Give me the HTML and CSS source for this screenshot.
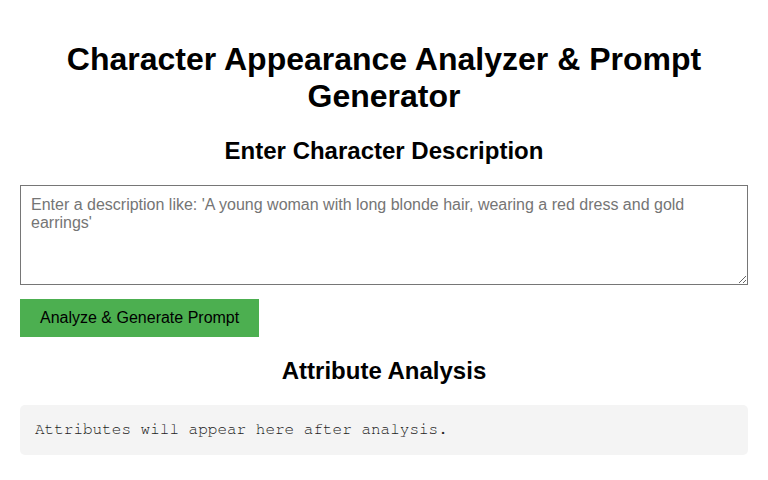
FILE: index.html
```html
<!DOCTYPE html>
<html>
<head>
<meta charset="utf-8">
<title>Character Appearance Analyzer</title>
<link rel="stylesheet" href="styles.css">
</head>
<body>
<h1 class="title">Character Appearance Analyzer &amp; Prompt Generator</h1>
<h2 class="section">Enter Character Description</h2>
<textarea class="desc" placeholder="Enter a description like: 'A young woman with long blonde hair, wearing a red dress and gold earrings'"></textarea>
<button class="go">Analyze &amp; Generate Prompt</button>
<h2 class="section">Attribute Analysis</h2>
<div class="output">Attributes will appear here after analysis.</div>
</body>
</html>
```
FILE: styles.css
```css
html, body {
  margin: 0;
  background: #fff;
}
body {
  padding: 20px;
  font-family: "Liberation Sans", Arial, sans-serif;
  color: #000;
}
.title {
  font-size: 32px;
  font-weight: bold;
  text-align: center;
  margin: 21.44px 0;
}
.section {
  font-size: 24px;
  font-weight: bold;
  text-align: center;
  margin: 19.92px 0;
}
.desc {
  display: block;
  box-sizing: border-box;
  width: 100%;
  height: 100px;
  padding: 10px;
  margin: 0;
  border: 1px solid #767676;
  font-family: "Liberation Sans", Arial, sans-serif;
  font-size: 16px;
  resize: vertical;
}
.desc::placeholder {
  color: #757575;
}
.go {
  display: block;
  margin-top: 14px;
  padding: 10px 20px;
  border: none;
  background: #4caf50;
  color: #000;
  font-family: "Liberation Sans", Arial, sans-serif;
  font-size: 16px;
  line-height: 18px;
}
.output {
  background: #f4f4f4;
  border-radius: 5px;
  padding: 14px 15px 16px;
  font-family: "Nimbus Mono PS", "FreeMono", Courier, "Liberation Mono", monospace;
  font-size: 16px;
  line-height: 20px;
  color: #222;
}
```
